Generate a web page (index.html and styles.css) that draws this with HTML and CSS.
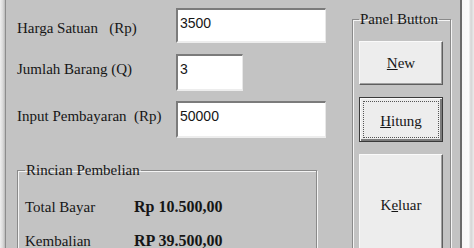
FILE: index.html
```html
<!DOCTYPE html>
<html lang="id">
<head>
    <meta charset="UTF-8">
    <title>Kasir - Hitung Pembayaran</title>
    <link rel="stylesheet" href="styles.css">
</head>
<body>
    <div class="screen">
        <div class="edge-left"></div>
        <div class="window">
            <div class="form">
                <div class="row row-harga">
                    <label class="label">Harga Satuan   (Rp)</label>
                    <div class="field wide">3500</div>
                </div>
                <div class="row row-jumlah">
                    <label class="label">Jumlah Barang (Q)</label>
                    <div class="field short">3</div>
                </div>
                <div class="row row-bayar">
                    <label class="label">Input Pembayaran  (Rp)</label>
                    <div class="field wide">50000</div>
                </div>

                <fieldset class="group rincian">
                    <legend>Rincian Pembelian</legend>
                    <div class="result">
                        <span class="result-label">Total Bayar</span>
                        <span class="result-value">Rp 10.500,00</span>
                    </div>
                    <div class="result">
                        <span class="result-label">Kembalian</span>
                        <span class="result-value">RP 39.500,00</span>
                    </div>
                </fieldset>
            </div>

            <fieldset class="group panel">
                <legend>Panel Button</legend>
                <button class="btn btn-new"><u>N</u>ew</button>
                <button class="btn btn-hitung"><span class="focus"><u>H</u>itung</span></button>
                <button class="btn btn-keluar">K<u>e</u>luar</button>
            </fieldset>
        </div>
        <div class="edge-right"></div>
    </div>
</body>
</html>
```

FILE: styles.css
```css
body {
    margin: 0;
    background: #e4e4e4;
    font-family: "Liberation Serif", serif;
    color: #161616;
}
.screen {
    display: flex;
    height: 248px;
    overflow: hidden;
}
.edge-left {
    width: 5px;
    flex-shrink: 0;
    background: linear-gradient(90deg, #efefef 0%, #d8d8d8 60%, #b9b9b9 100%);
}
.window {
    width: 457px;
    flex-shrink: 0;
    box-sizing: border-box;
    display: flex;
    background: #c3c3c3;
    border-left: 1px solid #8c8c8c;
    border-right: 2px solid #6a6a6a;
}
.edge-right {
    flex: 1;
    background: linear-gradient(90deg, #f6f6f6 0%, #fafafa 55%, #d4d4d4 75%, #ececec 100%);
}

/* input rows */
.form {
    width: 335px;
    flex-shrink: 0;
    padding: 8px 0 0 11px;
}
.row {
    display: flex;
    align-items: center;
    height: 35px;
}
.row-jumlah { height: 37px; margin-top: 11px; }
.row-bayar { height: 37px; margin-top: 10px; }
.label {
    width: 159px;
    font-size: 15px;
    white-space: pre;
}
.row-harga .label { padding-top: 6px; }
.row-jumlah .label { padding-bottom: 6px; }
.row-bayar .label { padding-bottom: 6px; }
.field {
    box-sizing: border-box;
    height: 100%;
    background: #fff;
    border-top: 2px solid #7b7b7b;
    border-left: 2px solid #7b7b7b;
    border-right: 1px solid #e8e8e8;
    border-bottom: 2px solid #ededed;
    padding: 5px 2px 0;
    font-family: "Liberation Sans", sans-serif;
    font-size: 14px;
}
.field.wide { width: 150px; }
.field.short { width: 67px; }

/* group boxes */
.group {
    box-sizing: border-box;
    min-width: 0;
    margin: 0;
    padding: 0;
    border: 1px solid #8a8a8a;
    box-shadow: inset 1px 1px #f4f4f4, 1px 1px #f4f4f4;
}
.group legend {
    font-size: 15px;
    padding: 0 1px;
    margin-left: 0;
}
.rincian {
    width: 300px;
    height: 130px;
    margin-top: 24px;
    padding: 11px 0 0 7px;
}
.result {
    display: flex;
    align-items: center;
    height: 34px;
}
.result-label {
    width: 109px;
    font-size: 15px;
}
.result-value {
    font-size: 16px;
    font-weight: bold;
}

/* button panel */
.panel {
    width: 99px;
    flex-shrink: 0;
    margin: 11px 0 0 0;
    padding: 13px 0 0 6px;
    height: 260px;
    display: flex;
    flex-direction: column;
    gap: 12px;
}
.btn {
    width: 84px;
    height: 44px;
    flex-shrink: 0;
    background: #ededed;
    font-family: "Liberation Serif", serif;
    font-size: 15px;
    color: #161616;
    border: 1px solid;
    border-color: #fafafa #5e5e5e #5e5e5e #fafafa;
    box-shadow: inset -1px -1px #a0a0a0;
    padding: 0;
}
.btn-hitung {
    height: 45px;
    border: 1px solid #3a3a3a;
    box-shadow: inset 1px 1px #fafafa, inset -2px -2px #7c7c7c;
    padding: 3px;
}
.btn-hitung .focus {
    display: flex;
    align-items: center;
    justify-content: center;
    height: 100%;
    padding-top: 3px;
    border: 1px dotted #555;
    box-sizing: border-box;
}
.btn-keluar { height: 110px; padding-bottom: 8px; }
```
